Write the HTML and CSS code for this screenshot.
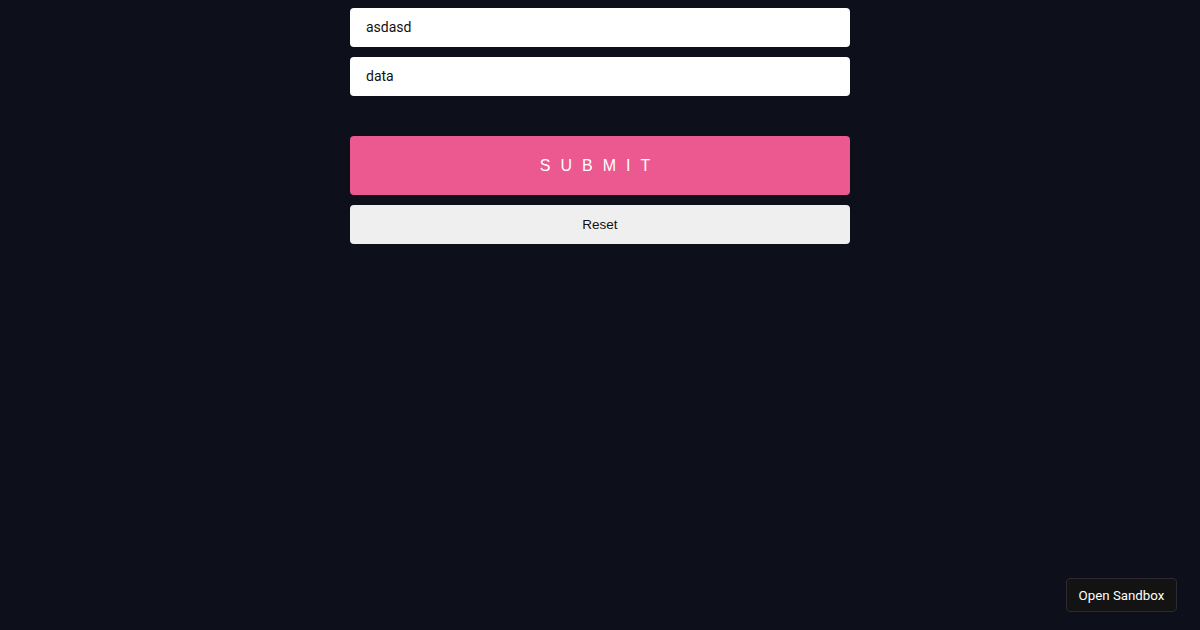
FILE: index.html
```html
<!DOCTYPE html>
<html>
<head>
<meta charset="utf-8">
<link rel="stylesheet" href="styles.css">
</head>
<body>
<form class="form">
  <input class="field" type="text" value="asdasd">
  <input class="field" type="text" value="data">
  <button class="submit" type="button">Submit</button>
  <button class="reset" type="button">Reset</button>
</form>
<button class="sandbox" type="button">Open Sandbox</button>
</body>
</html>
```
FILE: styles.css
```css
html, body {
  margin: 0;
  height: 100%;
}
body {
  background: #0d0f1a;
  font-family: Roboto, "Liberation Sans", sans-serif;
}
.form {
  width: 500px;
  margin: 0 auto;
  padding-top: 8px;
  display: flex;
  flex-direction: column;
}
.field {
  box-sizing: border-box;
  height: 39px;
  border: none;
  border-radius: 4px;
  background: #fff;
  padding: 0 16px 2px;
  font-family: Roboto, sans-serif;
  font-size: 14px;
  color: #111;
  margin-bottom: 10px;
  outline: none;
}
.submit {
  margin-top: 30px;
  height: 59px;
  border: none;
  border-radius: 4px;
  background: #ec5990;
  color: #fff;
  text-transform: uppercase;
  letter-spacing: 10px;
  font-family: "Liberation Sans", Arial, sans-serif;
  font-size: 16px;
  padding-left: 6px;
}
.reset {
  margin-top: 10px;
  height: 39px;
  border: none;
  border-radius: 4px;
  background: #efefef;
  color: #111;
  font-family: "Liberation Sans", Arial, sans-serif;
  font-size: 13.5px;
  padding-bottom: 2px;
}
.sandbox {
  position: fixed;
  right: 23px;
  bottom: 18px;
  width: 111px;
  height: 34px;
  box-sizing: border-box;
  background: #131313;
  border: 1px solid #2e2a33;
  border-radius: 4px;
  color: #fff;
  font-family: Roboto, sans-serif;
  font-size: 13.3px;
}
```
